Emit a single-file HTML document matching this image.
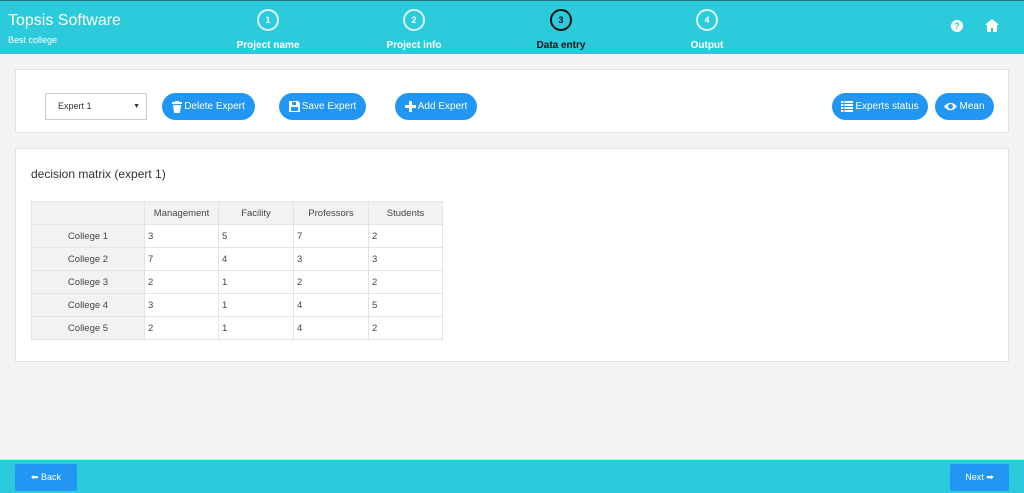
<!DOCTYPE html>
<html><head><style>
*{box-sizing:border-box;margin:0;padding:0}
body{width:1024px;height:493px;background:#f3f3f3;font-family:"Liberation Sans",sans-serif;position:relative;overflow:hidden}
.hdr{position:absolute;left:0;top:0;width:1024px;height:54px;background:#2bcbdc;border-top:1px solid #2a6f7a}
.t1{position:absolute;left:8px;top:11px;color:#fff;font-size:16px}
.t2{position:absolute;left:8px;top:34px;color:#fff;font-size:9px}
.step{position:absolute;top:8px;width:100px;text-align:center;color:#fff;font-size:10px;font-weight:bold}
.circ{width:22px;height:22px;border:2px solid #d8f2f5;border-radius:50%;margin:0 auto 9px;font-size:9px;line-height:18px}
.card{position:absolute;background:#fff;border:1px solid #e2e2e2}
.btn{position:absolute;height:27px;background:#2196f3;color:#fff;border-radius:14px;font-size:10px;line-height:27px;text-align:center;display:flex;align-items:center;justify-content:center;gap:2px}
.sel{position:absolute;left:45px;top:93px;width:102px;height:27px;border:1px solid #ccc;font-size:9px;line-height:25px;padding-left:12px;color:#333}
table{position:absolute;left:31px;top:201px;border-collapse:collapse;font-size:9.5px;color:#444}
td,th{border:1px solid #e3e3e3;height:23px;font-weight:normal}
th{background:#f2f2f2;text-align:center}
td{padding-left:3px}
td.r{background:#f2f2f2;text-align:center;padding:0}
.ftr{position:absolute;left:0;top:459px;width:1024px;height:34px;background:#2bcbdc;border-top:1px solid #ddd}
.fb{position:absolute;top:4px;height:27px;background:#2196f3;color:#fff;font-size:9px;line-height:27px;text-align:center;border-radius:2px}
</style></head><body>
<div class="hdr">
<div class="t1">Topsis Software</div><div class="t2">Best college</div>
<div class="step" style="left:218px"><div class="circ">1</div>Project name</div>
<div class="step" style="left:364px"><div class="circ">2</div>Project info</div>
<div class="step" style="left:511px"><div class="circ" style="border-color:#111;color:#111">3</div><span style="color:#111">Data entry</span></div>
<div class="step" style="left:657px"><div class="circ">4</div>Output</div>
<div style="position:absolute;left:951px;top:19px;width:12px;height:12px;border-radius:50%;background:#fff;color:#2bcbdc;font-size:9px;font-weight:bold;text-align:center;line-height:12px">?</div>
<svg style="position:absolute;left:985px;top:18px" width="14" height="13" viewBox="0 0 14 13"><path d="M7 0L0 6h2v7h4V9h2v4h4V6h2z" fill="#fff"/></svg>
</div>
<div class="card" style="left:15px;top:69px;width:994px;height:64px"></div>
<div class="sel">Expert 1<span style="position:absolute;right:6px;font-size:7px">▼</span></div>
<div class="btn" style="left:162px;top:93px;width:93px"><svg width="10" height="12" viewBox="0 0 10 12"><rect x="0" y="1" width="10" height="2" fill="#fff"/><rect x="3" y="0" width="4" height="2" fill="#fff"/><path d="M1 4h8l-1 8H2z" fill="#fff"/></svg>Delete Expert</div>
<div class="btn" style="left:279px;top:93px;width:87px"><svg width="11" height="11" viewBox="0 0 11 11"><path d="M0 0h9l2 2v9H0z" fill="#fff"/><rect x="3" y="1" width="4" height="3" fill="#2196f3"/><rect x="2" y="6" width="7" height="4" fill="#2196f3"/></svg>Save Expert</div>
<div class="btn" style="left:395px;top:93px;width:82px"><svg width="11" height="11" viewBox="0 0 11 11"><path d="M4 0h3v4h4v3H7v4H4V7H0V4h4z" fill="#fff"/></svg>Add Expert</div>
<div class="btn" style="left:832px;top:93px;width:96px"><svg width="12" height="11" viewBox="0 0 12 11"><path d="M0 0h12v2H0zM0 3h12v2H0zM0 6h12v2H0zM0 9h12v2H0z" fill="#fff"/><path d="M3 0v11" stroke="#2196f3"/></svg>Experts status</div>
<div class="btn" style="left:935px;top:93px;width:59px"><svg width="13" height="9" viewBox="0 0 13 9"><path d="M0 4.5Q6.5-3 13 4.5Q6.5 12 0 4.5z" fill="#fff"/><circle cx="6.5" cy="4.5" r="2.5" fill="#2196f3"/></svg>Mean</div>
<div class="card" style="left:15px;top:148px;width:994px;height:214px"></div>
<div style="position:absolute;left:31px;top:167px;font-size:12px;color:#333">decision matrix (expert 1)</div>
<table>
<tr><th style="width:113px"></th><th style="width:74px">Management</th><th style="width:75px">Facility</th><th style="width:75px">Professors</th><th style="width:74px">Students</th></tr>
<tr><td class="r">College 1</td><td>3</td><td>5</td><td>7</td><td>2</td></tr>
<tr><td class="r">College 2</td><td>7</td><td>4</td><td>3</td><td>3</td></tr>
<tr><td class="r">College 3</td><td>2</td><td>1</td><td>2</td><td>2</td></tr>
<tr><td class="r">College 4</td><td>3</td><td>1</td><td>4</td><td>5</td></tr>
<tr><td class="r">College 5</td><td>2</td><td>1</td><td>4</td><td>2</td></tr>
</table>
<div class="ftr">
<div class="fb" style="left:15px;width:62px">⬅ Back</div>
<div class="fb" style="left:950px;width:59px">Next ➡</div>
</div>
</body></html>
